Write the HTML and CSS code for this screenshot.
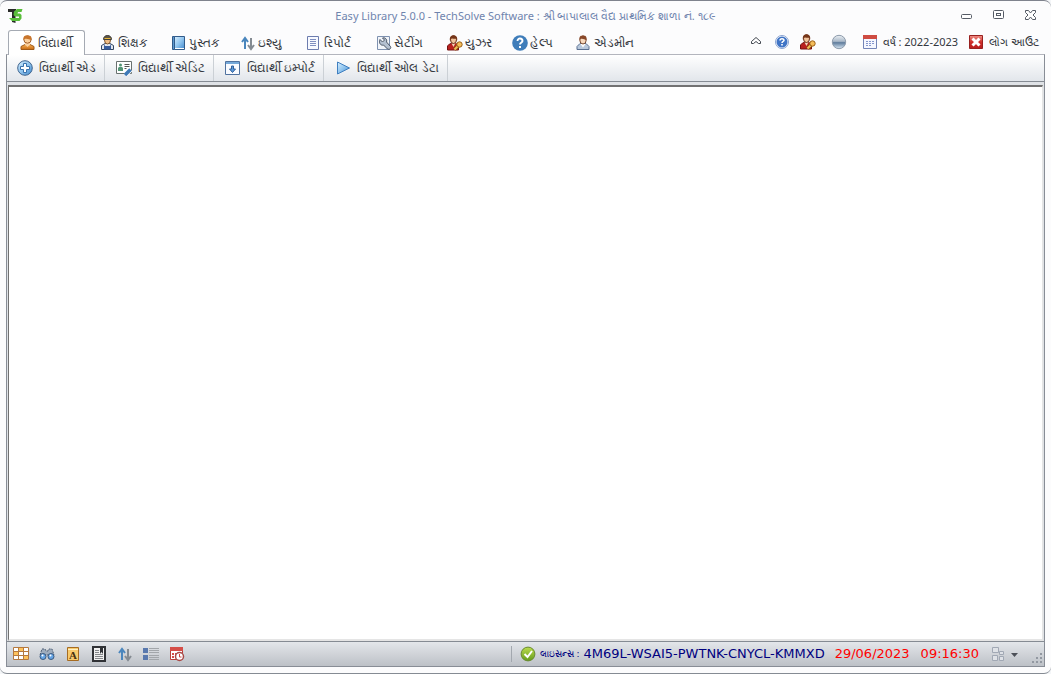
FILE: index.html
```html
<!DOCTYPE html>
<html lang="gu">
<head>
<meta charset="utf-8">
<title>Easy Library 5.0.0</title>
<link rel="stylesheet" href="styles.css">
</head>
<body>
<svg class="defs" aria-hidden="true">
<defs>
<linearGradient id="gBlue" x1="0" y1="0" x2="1" y2="1"><stop offset="0" stop-color="#d8efff"/><stop offset=".5" stop-color="#8fc4ee"/><stop offset="1" stop-color="#3d86cc"/></linearGradient>
<linearGradient id="gBall" x1="0" y1="0" x2="0" y2="1"><stop offset="0" stop-color="#eef2f6"/><stop offset=".45" stop-color="#a9b8c8"/><stop offset=".55" stop-color="#5f7c9c"/><stop offset="1" stop-color="#dbe9f5"/></linearGradient>
<linearGradient id="gOrange" x1="0" y1="0" x2="0" y2="1"><stop offset="0" stop-color="#f5b45c"/><stop offset="1" stop-color="#c9680e"/></linearGradient>
<linearGradient id="gRed" x1="0" y1="0" x2="0" y2="1"><stop offset="0" stop-color="#f0938a"/><stop offset=".5" stop-color="#cf2f2b"/><stop offset="1" stop-color="#b81c1c"/></linearGradient>
<linearGradient id="gGreen" x1="0" y1="0" x2="0" y2="1"><stop offset="0" stop-color="#bcdc4e"/><stop offset="1" stop-color="#659c1c"/></linearGradient>
<symbol id="userKey" viewBox="0 0 16 16"><path d="M.5 15v-4L2.500 9l3-1h3l3 2.500V15z" fill="#b9201f" stroke="#741011"/><path d="M4.500 8.500 6.500 12l2-4z" fill="#f3d4b8"/><ellipse cx="6.500" cy="4.700" rx="3" ry="3.800" fill="#f1c39b" stroke="#6a321b"/><path d="M3 6C2 1.500 4.500.2 6.500.2S11 1.500 10 6L9 3.500C7 4.500 5 2.500 4 4z" fill="#763619"/><path d="m7.500 14.500 4-4" stroke="#87500f" stroke-width="3.600"/><path d="m7.500 14.500 4-4" stroke="#f5bd59" stroke-width="2"/><circle cx="12.500" cy="9.500" r="2.700" fill="#f4bd5a" stroke="#9b6018"/></symbol>
<symbol id="sortArrows" viewBox="0 0 16 16"><path d="M5 14V4M2 7l3-4 3 4" fill="none" stroke="#4a86bd" stroke-width="2"/><path d="M11 3v10M8 10l3 4 3-4" fill="none" stroke="#848b92" stroke-width="2"/></symbol>
</defs>
</svg>
<div class="window">
<header class="titlebar">
<svg class="logo" viewBox="0 0 16 16"><path d="M0 1h8v3H0zM4 3h3.500v12L4 14z" fill="#292b29"/><path d="M14.500 1H9L6 3.500 5.500 7 7 8.500h4V10H1l3 3h7.500l2-2.500V7L12 5.500H9.500L10 4h3.500z" fill="#58bd3a"/></svg>
<h1 class="title">Easy Library 5.0.0 - TechSolve Software : શ્રી બાપાલાલ વૈદ્ય પ્રાથમિક શાળા નં. ૧૮૯</h1>
<div class="winbtns">
<button aria-label="Minimize"><svg viewBox="0 0 12 12"><rect x=".5" y="4.500" width="10" height="4" rx="1" fill="#fff" stroke="#555b65"/></svg></button>
<button aria-label="Restore"><svg viewBox="0 0 12 12"><rect x=".5" y=".5" width="10" height="8" rx="1" fill="#fff" stroke="#555b65"/><rect x="3.500" y="3.500" width="4" height="2" fill="none" stroke="#555b65"/></svg></button>
<button aria-label="Close"><svg viewBox="0 0 12 12"><path d="M.5.500h3L5.500 3l2-2.500h3v2L8 5l2.500 2.500v2h-3L5.500 7l-2 2.500h-3v-2L3 5 .5 2.500z" fill="#fff" stroke="#555b65"/></svg></button>
</div>
</header>
<div class="menubar">
<nav class="tabs">
<button class="tab active"><svg viewBox="0 0 16 16"><path d="M1 14.500v-3l4-2h5l4 2v3z" fill="url(#gOrange)" stroke="#a05a17"/><path d="M5 9.500 7.500 12 10 9.500V7H5z" fill="#fbd1a0"/><circle cx="7.500" cy="4.500" r="3.700" fill="#fbd09c" stroke="#a2602a"/><path d="M3.500 5C3 1 5 .5 7.500.5S12 1 11.500 5C9 4 5 2.500 3.500 5z" fill="#c9752b"/></svg>વિદ્યાર્થી</button>
<button class="tab"><svg viewBox="0 0 16 16"><path d="M1.500 14.500v-4L5 8.500h5l3.500 2v4z" fill="#e4e8ef" stroke="#344660"/><path d="M4 9v5.500h7V9l-1 2H5z" fill="#385c9b"/><ellipse cx="7.500" cy="5" rx="3" ry="4" fill="#f0bd86" stroke="#82592d"/><path d="M3.500 4.500C3.500 1.500 5.500.5 7.500.5s4 1 4 4z" fill="#5d5546" stroke="#3f3d3b"/><path d="M4.500 3.500h6" stroke="#e9b637"/></svg>શિક્ષક</button>
<button class="tab"><svg viewBox="0 0 16 16"><path d="M3.500 1.500h10v13h-10z" fill="url(#gBlue)" stroke="#315b8a"/><path d="M1.500 1.500h2v13h-2z" fill="#5b98ce" stroke="#315b8a"/><path d="M4 13.500h9" stroke="#fff"/></svg>પુસ્તક</button>
<button class="tab"><svg viewBox="0 0 16 16"><use href="#sortArrows"/></svg>ઇશ્યુ</button>
<button class="tab"><svg viewBox="0 0 16 16"><path d="M1.500 1.500h11v13h-11z" fill="#f7f9ff" stroke="#6c7cae"/><path d="M4 4.500h6M4 6.500h6M4 8.500h6M4 10.500h6" stroke="#7f8fc0"/></svg>રિપોર્ટ</button>
<button class="tab"><svg viewBox="0 0 16 16"><path d="M1.500 1.500h12v13h-12z" fill="#f2f5fa" stroke="#7e91b0"/><path d="M4 4.500 6.500 7 8.500 5 6.500 3C9 2 11.500 4.500 10.500 7l4 4.500c1 2-1 3.500-3 2.500L7.500 10C4.500 11 2.500 7.500 4 4.500z" fill="#b4c0d0" stroke="#4b5564"/></svg>સેટીંગ</button>
<button class="tab"><svg viewBox="0 0 16 16"><use href="#userKey"/></svg>યુઝર</button>
<button class="tab"><svg viewBox="0 0 16 16"><circle cx="8" cy="8" r="7.800" fill="#3f7dba"/><path d="M5.500 6C5.500 2.500 10.500 3 10.500 6 10.500 7.500 8 7.500 8 9.500" fill="none" stroke="#fff" stroke-width="1.900"/><path d="M7 11h2v2H7z" fill="#fff"/></svg>હેલ્પ</button>
<button class="tab"><svg viewBox="0 0 16 16"><path d="M1 14.500v-3l3-3h6l3 3v3z" fill="#b8c8dc" stroke="#596f91"/><path d="m4.500 9 2.500 3.500L9.500 9z" fill="#fff"/><ellipse cx="7" cy="5" rx="3.200" ry="4" fill="#f7d9be" stroke="#7a4a30"/><path d="M3.500 5C3 1 5 .5 7 .5S11 1 10.500 5C8 4 5 2.500 3.500 5z" fill="#884728"/></svg>એડમીન</button>
</nav>
<div class="quick">
<button class="q" aria-label="Collapse"><svg viewBox="0 0 16 16"><path d="m3.500 7.500 4.500-4 4.500 4v2h-2L8 7.500l-2.500 2h-2z" fill="#fff" stroke="#41464f"/></svg></button>
<button class="q" aria-label="Help"><svg viewBox="0 0 16 16"><circle cx="8" cy="8" r="6.500" fill="#fff" stroke="#8aa3d0"/><circle cx="8" cy="8" r="5.500" fill="#3f74c6"/><path d="M6 6.500C6 4 10 4 10 6.500 10 7.500 8 7.500 8 9" fill="none" stroke="#fff" stroke-width="1.500"/><path d="M7.200 10h1.600v1.600H7.200z" fill="#fff"/></svg></button>
<button class="q" aria-label="User"><svg viewBox="0 0 16 16"><use href="#userKey"/></svg></button>
<button class="q ball" aria-label="Theme"><svg viewBox="0 0 16 16"><circle cx="8" cy="8" r="6.700" fill="url(#gBall)" stroke="#8d9bab"/></svg></button>
<button class="q"><svg viewBox="0 0 16 16"><path d="M1.500 1.500h13v13h-13z" fill="#f5f7ff" stroke="#7485b8"/><path d="M1 1h14v4H1z" fill="#cf4c42"/><path d="M4 7.500h9M4 9.500h9M4 11.500h6" stroke="#8496cc" stroke-dasharray="2 1"/></svg>વર્ષ : 2022-2023</button>
<button class="q"><svg viewBox="0 0 16 16"><path d="M1.500 1.500h13v13h-13z" fill="url(#gRed)" stroke="#98201f"/><path d="m4.500 4.500 7 7m0-7-7 7" stroke="#fff" stroke-width="3"/></svg>લોગ આઉટ</button>
</div>
</div>
<div class="panel">
<div class="toolbar">
<button class="tool"><svg viewBox="0 0 16 16"><circle cx="8" cy="8" r="7.300" fill="url(#gBlue)" stroke="#40658f"/><path d="M6.500 3.500h3v3h3v3h-3v3h-3v-3h-3v-3h3z" fill="#fff" stroke="#3972ad"/></svg>વિદ્યાર્થી એડ</button>
<button class="tool"><svg viewBox="0 0 16 16"><path d="M.5 1.500h15v12H.5z" fill="#fff" stroke="#69716f"/><circle cx="4.500" cy="5" r="1.500" fill="#539576"/><path d="M2 11V8l1-1h3l1 1v3z" fill="#539576"/><path d="M8.500 4.500h5M8.500 6.500h5M8.500 8.500h2" stroke="#555"/><path d="m9.500 14.500 5-5" stroke="#fff" stroke-width="5"/><path d="m9 15 5.500-5.500" stroke="#3e79b7" stroke-width="3.500"/></svg>વિદ્યાર્થી એડિટ</button>
<button class="tool"><svg viewBox="0 0 16 16"><path d="M.5 1.500h14v13H.5z" fill="#f9fbff" stroke="#50729f"/><path d="M1 2h13v2H1z" fill="#75a9d9"/><path d="M6.500 6h2v3h2l-3 3.500L4.500 9h2z" fill="#5b9bdd" stroke="#315f99"/></svg>વિદ્યાર્થી ઇમ્પોર્ટ</button>
<button class="tool"><svg viewBox="0 0 16 16"><path d="M2.500 2v12l12-6z" fill="url(#gBlue)" stroke="#3f7fc0"/></svg>વિદ્યાર્થી ઓલ ડેટા</button>
</div>
<main class="workspace"></main>
<footer class="status">
<div class="shortcuts">
<button aria-label="Grid"><svg viewBox="0 0 16 16"><path d="M.5 1.500h15v12H.5z" fill="#fff"/><path d="M5 1h5v4H5zM0 5h5v4H0zM10 9h5v4h-5z" fill="#ffc35b"/><path d="M.5 1.500h15v12H.5zM0 5.500h16M0 9.500h16M5.500 1v13M10.500 1v13" fill="none" stroke="#b5793f"/></svg></button>
<button aria-label="Find"><svg viewBox="0 0 16 16"><path d="M3 3h3l1 2h2l1-2h3l2 6H1z" fill="#9eacbd" stroke="#506177" stroke-dasharray="2 1"/><circle cx="4" cy="10.500" r="3" fill="#65a5e6" stroke="#3c597e"/><circle cx="12" cy="10.500" r="3" fill="#65a5e6" stroke="#3c597e"/><circle cx="3.500" cy="9.500" r="1" fill="#fff"/><circle cx="11.500" cy="9.500" r="1" fill="#fff"/></svg></button>
<button aria-label="Dictionary"><svg viewBox="0 0 16 16"><path d="M2.500 1.500h11v13h-11z" fill="#f8ca6c" stroke="#a66c22"/><path d="M3 3.500h10" stroke="#fff1c3"/><text x="8" y="12.500" class="letter">A</text></svg></button>
<button aria-label="Book"><svg viewBox="0 0 16 16"><path d="M2 1h12v14H2z" fill="#f1f1f1" stroke="#303236" stroke-width="2"/><path d="M9 2h3v6l-1.500-2L9 8z" fill="#303236"/><path d="M4 4.500h4M4 6.500h4M4 8.500h8M4 10.500h8M4 12.500h8" stroke="#85888b"/></svg></button>
<button aria-label="Sort"><svg viewBox="0 0 16 16"><use href="#sortArrows"/></svg></button>
<button aria-label="List"><svg viewBox="0 0 16 16"><path d="M0 2h5v5H0zM0 9h5v5H0z" fill="#5878ae"/><path d="M6 2.500h10M6 4.500h10M6 6.500h10M6 9.500h10M6 11.500h10M6 13.500h10" stroke="#a2a6aa"/></svg></button>
<button aria-label="Schedule"><svg viewBox="0 0 16 16"><path d="M1.500 1.500h12v12h-12z" fill="#fff" stroke="#b8413a"/><path d="M1 1h13v4H1zM3 7h2v2H3zM6 7h2v2H6zM3 10h2v2H3z" fill="#d54e48"/><circle cx="10.500" cy="10.500" r="4" fill="#fff" stroke="#a84a48" stroke-width="1.500"/><path d="M10.500 8v3h2" fill="none" stroke="#cc4844"/></svg></button>
</div>
<div class="license"><svg viewBox="0 0 16 16"><circle cx="8" cy="8" r="6.900" fill="url(#gGreen)" stroke="#698b33"/><path d="m4.500 8 3 3L12 5" fill="none" stroke="#fff" stroke-width="2"/></svg><span class="lic-label">લાઇસન્સ :</span><span class="key">4M69L-WSAI5-PWTNK-CNYCL-KMMXD</span></div>
<time class="date">29/06/2023</time>
<time class="clock">09:16:30</time>
<button class="views" aria-label="Views"><svg viewBox="0 0 28 16"><path d="M2.500 1.500h6v5h-6zM2.500 9.500h5v5h-5zM9.500 5.500h4v3h-4zM9.500 10.500h4v4h-4z" fill="#dfe2e7" stroke="#a1a8b4"/><path d="M21 7h7l-3.500 4z" fill="#4c5058"/></svg></button>
<svg class="grip" viewBox="0 0 12 12"><path d="M9 1h2v2H9zM5 5h2v2H5zM9 5h2v2H9zM1 9h2v2H1zM5 9h2v2H5zM9 9h2v2H9z" fill="#9298a1"/></svg>
</footer>
</div>
</div>
</body>
</html>
```
FILE: styles.css
```css
* { box-sizing: border-box; }
body {
  margin: 0;
  background: #f4f6f8;
  font: 12px/16px "Noto Sans", "Open Sans", sans-serif;
  color: #343840;
}
button {
  margin: 0;
  padding: 0;
  border: 0;
  background: none;
  font: inherit;
  color: inherit;
  white-space: nowrap;
}
svg { display: block; width: 16px; height: 16px; flex: none; }
.defs { position: absolute; width: 0; height: 0; }
.window {
  height: 100vh;
  display: flex;
  flex-direction: column;
  padding: 0 6px 6px;
  background: #fcfcfd;
  border-top: 1px solid #7f838d;
  border-bottom: 1px solid #858b93;
  border-radius: 7px;
}
.titlebar {
  display: grid;
  grid-template-columns: 80px 1fr 80px;
  align-items: center;
  height: 29px;
}
.logo { margin-left: 2px; }
.title {
  margin: 0;
  font-size: 11px;
  font-weight: 400;
  text-align: center;
  color: #6f84ad;
  white-space: nowrap;
}
.winbtns { display: flex; gap: 20px; justify-content: flex-end; padding-right: 8px; }
.winbtns svg { width: 12px; height: 12px; }
.menubar { display: flex; justify-content: space-between; height: 24px; padding-left: 2px; }
.tabs {
  display: grid;
  grid-template-columns: 79px 71px 69px 66px 70px 71px 65px 64px 80px;
}
.tab { display: flex; align-items: center; gap: 2px; padding-left: 13px; }
.tab.active {
  position: relative;
  z-index: 1;
  width: 77px;
  height: 25px;
  padding-left: 11px;
  border: 1px solid #a5aab3;
  border-bottom: 0;
  border-radius: 3px 3px 0 0;
  background: #fff;
}
.quick { display: flex; align-items: center; gap: 10px; padding-right: 6px; font-size: 11px; }
.q { display: flex; align-items: center; gap: 5px; }
.ball { margin: 0 5px; }
.panel {
  flex: 1;
  display: flex;
  flex-direction: column;
  min-height: 0;
  border: 1px solid #888d96;
  border-top-color: #b3b5bd;
  background: #dfe2e6;
}
.toolbar {
  display: flex;
  height: 27px;
  background: linear-gradient(#fff, #e2e6eb);
  border-bottom: 1px solid #858b93;
}
.tool {
  display: flex;
  align-items: center;
  gap: 6px;
  padding: 0 8px 0 11px;
  border-right: 1px solid #cbd0d5;
}
.tool:first-child { padding-left: 10px; }
.workspace {
  flex: 1;
  margin: 3px 1px 0;
  border: solid #727272;
  border-width: 2px 1px 2px 1px;
  border-right-color: #e5e5e5;
  border-bottom-color: #e5e5e5;
  background: #fff;
}
.status {
  display: flex;
  align-items: center;
  height: 25px;
  padding-left: 6px;
  border-top: 1px solid #858b93;
  background: linear-gradient(#e3e6ea, #bdc1c7);
  font-family: "DejaVu Sans", sans-serif;
}
.shortcuts { display: flex; gap: 10px; flex: 1; }
.letter { font: bold 11px "Liberation Serif", serif; text-anchor: middle; fill: #46300f; }
.license {
  display: flex;
  align-items: center;
  gap: 4px;
  padding-left: 8px;
  border-left: 1px solid #a3a8af;
  color: #00007f;
}
.lic-label { font-size: 9px; }
.key, .date, .clock { font-size: 13px; white-space: nowrap; }
.date, .clock { margin-left: 10px; color: #f00; }
.date { margin-right: 1px; }
.views { margin-left: 11px; }
.views svg { width: 28px; }
.grip { width: 12px; height: 12px; margin: 8px 1px 0 13px; }
```
